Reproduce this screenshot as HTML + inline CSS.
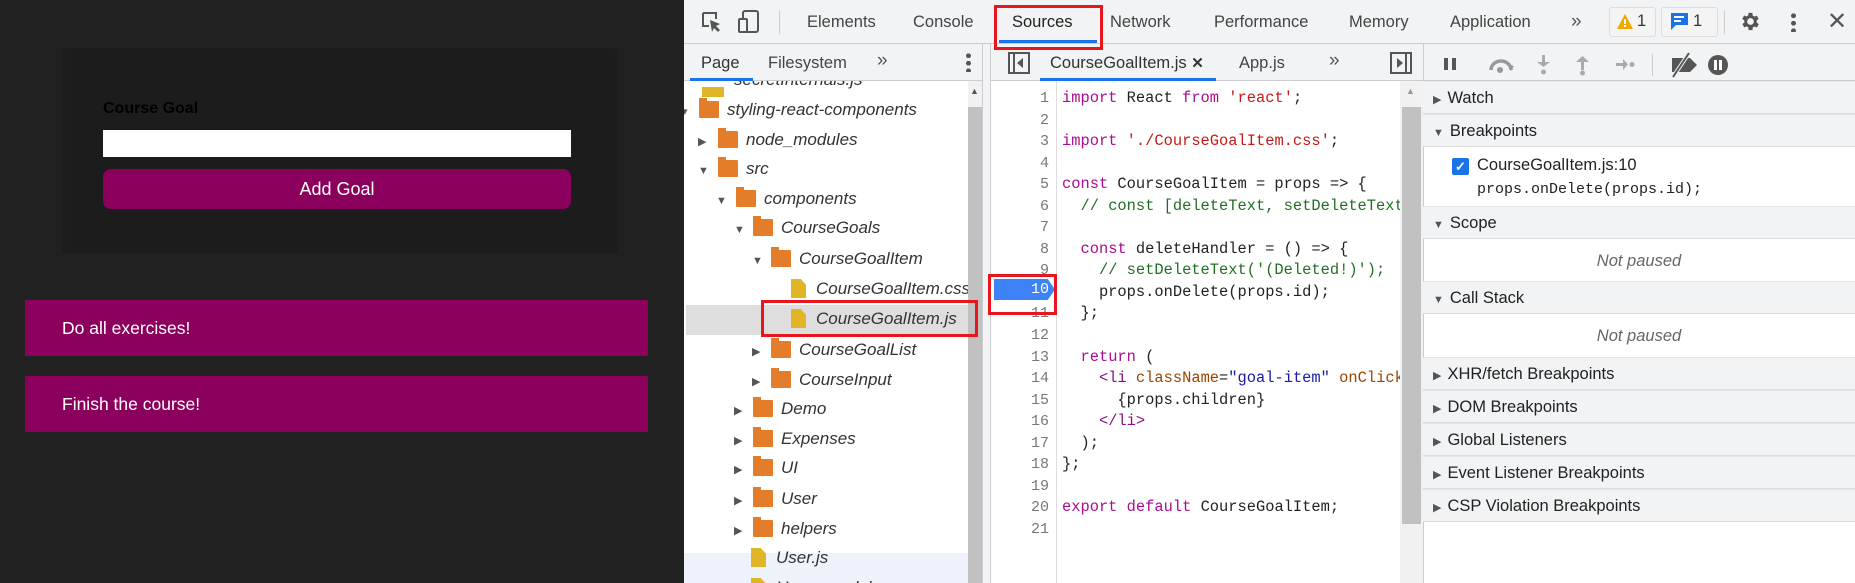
<!DOCTYPE html>
<html><head><meta charset="utf-8"><style>
*{margin:0;padding:0;box-sizing:border-box}
body{width:1855px;height:583px;overflow:hidden;position:relative;background:#fff;font-family:"Liberation Sans",sans-serif}
.a{position:absolute}
.ui{font-size:16.5px;color:#333;white-space:nowrap}
.code{font-family:"Liberation Mono",monospace;font-size:15.8px;white-space:pre;color:#222}
.k{color:#aa0d91}.s{color:#c41a16}.c{color:#236e25}.t{color:#881280}.at{color:#994500}.v{color:#1a1aa6}
.tr{position:absolute;height:30px;line-height:30px;font-size:17px;font-style:italic;color:#333;white-space:nowrap}
.fo{display:inline-block;width:20px;height:17px;background:#e37d2a;vertical-align:-3px;margin-right:8px;position:relative;border-radius:1px}
.fo:before{content:"";position:absolute;left:0;top:-3px;width:8px;height:4px;background:#e37d2a}
.fi{display:inline-block;width:15px;height:19px;background:#e0b526;vertical-align:-4px;margin-right:10px;margin-left:3px;clip-path:polygon(0 0,65% 0,100% 30%,100% 100%,0 100%)}
.ar{display:inline-block;width:14px;font-size:11px;font-style:normal;color:#555}
.hd{position:absolute;left:1423px;width:432px;height:33px;background:#f1f3f4;border-bottom:1px solid #ddd;border-top:1px solid #e4e4e4;font-size:16.5px;line-height:32px;color:#222;padding-left:10px}
.hd i{font-style:normal;font-size:11px;color:#555;margin-right:6px}
.np{position:absolute;left:1423px;width:432px;text-align:center;font-style:italic;color:#666;font-size:16.5px}
.red{position:absolute;border:3px solid #e8141e}
</style></head><body>
<!-- left app -->
<div class="a" style="left:0;top:0;width:684px;height:583px;background:#212121"></div>
<div class="a" style="left:62px;top:48px;width:556px;height:205px;background:#1d1d1d"></div>
<div class="a" style="left:71px;top:53px;width:542px;height:195px;background:#1c1c1c"></div>
<div class="a" style="left:103px;top:100px;font-weight:bold;font-size:16px;color:#000">Course Goal</div>
<div class="a" style="left:103px;top:130px;width:468px;height:27px;background:#fff"></div>
<div class="a" style="left:103px;top:169px;width:468px;height:40px;background:#8b005d;border-radius:8px;color:#fff;font-size:18px;text-align:center;line-height:40px">Add Goal</div>
<div class="a" style="left:25px;top:300px;width:623px;height:56px;background:#8b005d;color:#fff;font-size:17.5px;line-height:56px;padding-left:37px">Do all exercises!</div>
<div class="a" style="left:25px;top:376px;width:623px;height:56px;background:#8b005d;color:#fff;font-size:17.5px;line-height:56px;padding-left:37px">Finish the course!</div>

<!-- devtools top bar -->
<div class="a" style="left:684px;top:0;width:1171px;height:44px;background:#f1f3f4;border-bottom:1px solid #cbcdd1"></div>
<svg class="a" style="left:700px;top:10px" width="24" height="24" viewBox="0 0 24 24"><path d="M3 3h13v6M3 3v13h6" fill="none" stroke="#555" stroke-width="2"/><path d="M10 10l10 4-4 2 4 4-2 2-4-4-2 4z" fill="#555"/></svg>
<svg class="a" style="left:737px;top:9px" width="24" height="26" viewBox="0 0 24 26"><rect x="6" y="2" width="15" height="21" rx="2" fill="none" stroke="#555" stroke-width="2"/><rect x="2" y="10" width="8" height="13" rx="1" fill="#f1f3f4" stroke="#555" stroke-width="2"/></svg>
<div class="a" style="left:779px;top:10px;width:1px;height:24px;background:#ccc"></div>
<div class="a ui" style="left:807px;top:13px;color:#444">Elements</div>
<div class="a ui" style="left:913px;top:13px;color:#444">Console</div>
<div class="a ui" style="left:1012px;top:13px;color:#222">Sources</div>
<div class="a" style="left:999px;top:40px;width:98px;height:3px;background:#1a73e8"></div>
<div class="a ui" style="left:1110px;top:13px;color:#444">Network</div>
<div class="a ui" style="left:1214px;top:13px;color:#444">Performance</div>
<div class="a ui" style="left:1349px;top:13px;color:#444">Memory</div>
<div class="a ui" style="left:1450px;top:13px;color:#444">Application</div>
<div class="a ui" style="left:1571px;top:11px;font-size:19px;color:#555">»</div>
<div class="a" style="left:1609px;top:7px;width:47px;height:30px;border:1px solid #ddd;border-radius:3px;background:#f4f4f4"></div>
<svg class="a" style="left:1617px;top:14px" width="16" height="15" viewBox="0 0 16 15"><path d="M8 0L16 15H0z" fill="#f2a600"/><rect x="7" y="5" width="2" height="5" fill="#fff"/><rect x="7" y="11" width="2" height="2" fill="#fff"/></svg>
<div class="a ui" style="left:1637px;top:12px">1</div>
<div class="a" style="left:1661px;top:7px;width:57px;height:30px;border:1px solid #ddd;border-radius:3px;background:#f4f4f4"></div>
<svg class="a" style="left:1671px;top:13px" width="17" height="18" viewBox="0 0 17 18"><path d="M0 0h17v12H5l-5 5z" fill="#1a73e8"/><rect x="3" y="3" width="10" height="2" fill="#fff"/><rect x="3" y="7" width="7" height="2" fill="#fff"/></svg>
<div class="a ui" style="left:1693px;top:12px">1</div>
<div class="a" style="left:1724px;top:10px;width:1px;height:24px;background:#ccc"></div>
<svg class="a" style="left:1739px;top:10px" width="23" height="23" viewBox="0 0 24 24"><path fill="#555" d="M19.4 13a7.5 7.5 0 000-2l2.1-1.6-2-3.5-2.5 1a7 7 0 00-1.7-1L15 3h-4l-.4 2.8a7 7 0 00-1.7 1l-2.5-1-2 3.5L6.6 11a7.5 7.5 0 000 2l-2.1 1.6 2 3.5 2.5-1a7 7 0 001.7 1L11 21h4l.4-2.8a7 7 0 001.7-1l2.5 1 2-3.5zM13 15.5a3.5 3.5 0 110-7 3.5 3.5 0 010 7z" transform="translate(-1 0)"/></svg>
<div class="a" style="left:1791px;top:12px;width:5px;height:20px;background:radial-gradient(circle,#555 2.3px,transparent 2.5px) 0 0/5px 7.5px"></div>
<div class="a" style="left:1827px;top:7px;font-size:24px;color:#555">✕</div>

<!-- second row -->
<div class="a" style="left:684px;top:44px;width:1171px;height:37px;background:#f1f3f4;border-bottom:1px solid #cbcdd1"></div>
<div class="a ui" style="left:701px;top:54px">Page</div>
<div class="a" style="left:690px;top:78px;width:63px;height:3px;background:#1a73e8"></div>
<div class="a ui" style="left:768px;top:54px;color:#444">Filesystem</div>
<div class="a ui" style="left:877px;top:50px;font-size:19px;color:#555">»</div>
<div class="a" style="left:966px;top:52px;width:5px;height:20px;background:radial-gradient(circle,#555 2.3px,transparent 2.5px) 0 0/5px 7.5px"></div>
<div class="a" style="left:982px;top:44px;width:9px;height:539px;background:#f1f3f4;border-left:1px solid #cbcdd1;border-right:1px solid #cbcdd1"></div>
<svg class="a" style="left:1008px;top:52px" width="22" height="22" viewBox="0 0 22 22"><rect x="1" y="1" width="20" height="20" fill="none" stroke="#555" stroke-width="2"/><rect x="5" y="2" width="2" height="18" fill="#555"/><path d="M15 6v10l-6-5z" fill="#555"/></svg>
<div class="a ui" style="left:1050px;top:54px">CourseGoalItem.js <b style="font-size:15px">✕</b></div>
<div class="a" style="left:1040px;top:78px;width:176px;height:3px;background:#1a73e8"></div>
<div class="a ui" style="left:1239px;top:54px;color:#444">App.js</div>
<div class="a ui" style="left:1329px;top:50px;font-size:19px;color:#555">»</div>
<svg class="a" style="left:1390px;top:52px" width="22" height="22" viewBox="0 0 22 22"><rect x="1" y="1" width="20" height="20" fill="none" stroke="#555" stroke-width="2"/><rect x="15" y="2" width="2" height="18" fill="#555"/><path d="M7 6v10l6-5z" fill="#555"/></svg>
<div class="a" style="left:1423px;top:44px;width:1px;height:539px;background:#cbcdd1"></div>

<!-- debugger toolbar -->
<svg class="a" style="left:1435px;top:50px" width="300" height="30" viewBox="0 0 300 30">
<rect x="9" y="8" width="4" height="12" fill="#555"/><rect x="17" y="8" width="4" height="12" fill="#555"/>
<path d="M56 20a10 9 0 0120 0" fill="none" stroke="#999" stroke-width="3.5"/><circle cx="65" cy="20" r="3" fill="#999"/><path d="M72 14l7 2-3 5z" fill="#999"/>
<rect x="107" y="5" width="3" height="9" fill="#aaa"/><path d="M102 12h13l-6.5 5z" fill="#aaa"/><circle cx="108.5" cy="22" r="2.5" fill="#aaa"/>
<rect x="146" y="11" width="3" height="9" fill="#aaa"/><path d="M141 12h13l-6.5-6z" fill="#aaa"/><circle cx="147.5" cy="23" r="2.5" fill="#aaa"/>
<rect x="181" y="13" width="8" height="3" fill="#aaa"/><path d="M188 9v11l5-5.5z" fill="#aaa"/><circle cx="197" cy="14.5" r="2.5" fill="#aaa"/>
<rect x="217" y="4" width="1" height="22" fill="#ccc"/>
<path d="M237 8h18l7 7-7 7h-18z" fill="#555"/><path d="M254 3l-16 24" stroke="#f1f3f4" stroke-width="4"/><path d="M254 3l-16 24" stroke="#555" stroke-width="2"/>
<circle cx="283" cy="15" r="10" fill="#555"/><rect x="279" y="10" width="3" height="10" fill="#fff"/><rect x="284" y="10" width="3" height="10" fill="#fff"/>
</svg>

<!-- file tree -->
<div class="a" style="left:686px;top:305px;width:282px;height:30px;background:#dedede"></div>
<div class="a" style="left:684px;top:553px;width:284px;height:30px;background:#eef3fb"></div>
<div class="a" style="left:684px;top:81px;width:284px;height:502px;overflow:hidden">
<div class="tr" style="left:15px;top:-16px"><span class="fi" style="width:22px;height:10px;clip-path:none;vertical-align:-12px"></span>secretInternals.js</div>
<div class="tr" style="left:-2px;top:14px"><span class="ar" style="width:17px">▾</span><span class="fo"></span>styling-react-components</div>
<div class="tr" style="left:14px;top:44px"><span class="ar" style="width:20px">▶</span><span class="fo"></span>node_modules</div>
<div class="tr" style="left:14px;top:73px"><span class="ar" style="width:20px">▼</span><span class="fo"></span>src</div>
<div class="tr" style="left:32px;top:103px"><span class="ar" style="width:20px">▼</span><span class="fo"></span>components</div>
<div class="tr" style="left:50px;top:132px"><span class="ar" style="width:19px">▼</span><span class="fo"></span>CourseGoals</div>
<div class="tr" style="left:68px;top:163px"><span class="ar" style="width:19px">▼</span><span class="fo"></span>CourseGoalItem</div>
<div class="tr" style="left:104px;top:193px"><span class="fi"></span>CourseGoalItem.css</div>
<div class="tr" style="left:104px;top:223px"><span class="fi"></span>CourseGoalItem.js</div>
<div class="tr" style="left:68px;top:254px"><span class="ar" style="width:19px">▶</span><span class="fo"></span>CourseGoalList</div>
<div class="tr" style="left:68px;top:284px"><span class="ar" style="width:19px">▶</span><span class="fo"></span>CourseInput</div>
<div class="tr" style="left:50px;top:313px"><span class="ar" style="width:19px">▶</span><span class="fo"></span>Demo</div>
<div class="tr" style="left:50px;top:343px"><span class="ar" style="width:19px">▶</span><span class="fo"></span>Expenses</div>
<div class="tr" style="left:50px;top:372px"><span class="ar" style="width:19px">▶</span><span class="fo"></span>UI</div>
<div class="tr" style="left:50px;top:403px"><span class="ar" style="width:19px">▶</span><span class="fo"></span>User</div>
<div class="tr" style="left:50px;top:433px"><span class="ar" style="width:19px">▶</span><span class="fo"></span>helpers</div>
<div class="tr" style="left:64px;top:462px"><span class="fi"></span>User.js</div>
<div class="tr" style="left:64px;top:492px"><span class="fi"></span>Users.module.css</div>
</div>
<div class="a" style="left:968px;top:81px;width:14px;height:502px;background:#f1f1f1"></div>
<div class="a" style="left:968px;top:107px;width:14px;height:476px;background:#c1c1c1"></div>
<div class="a" style="left:970px;top:86px;font-size:9px;color:#555">▲</div>

<!-- editor -->
<div class="a" style="left:1056px;top:81px;width:1px;height:502px;background:#ddd"></div>
<div class="a code" style="left:1000px;top:88px;width:49px;text-align:right;line-height:21.55px;color:#777;font-size:15px">1
2
3
4
5
6
7
8
9

11
12
13
14
15
16
17
18
19
20
21</div>
<div class="a" style="left:994px;top:279px;width:61px;height:21px;background:#3e82f7;clip-path:polygon(0 0,88% 0,100% 50%,88% 100%,0 100%)"></div>
<div class="a code" style="left:1020px;top:279px;width:29px;text-align:right;line-height:21px;color:#fff;font-size:15px">10</div>
<div class="a code" style="left:1062px;top:88px;line-height:21.55px;width:338px;overflow:hidden;font-size:15.4px"><span class="k">import</span> React <span class="k">from</span> <span class="s">'react'</span>;

<span class="k">import</span> <span class="s">'./CourseGoalItem.css'</span>;

<span class="k">const</span> CourseGoalItem = props => {
  <span class="c">// const [deleteText, setDeleteText]</span>

  <span class="k">const</span> deleteHandler = () => {
    <span class="c">// setDeleteText('(Deleted!)');</span>
    props.onDelete(props.id);
  };

  <span class="k">return</span> (
    <span class="t">&lt;li</span> <span class="at">className</span>=<span class="v">"goal-item"</span> <span class="at">onClick</span>
      {props.children}
    <span class="t">&lt;/li&gt;</span>
  );
};

<span class="k">export</span> <span class="k">default</span> CourseGoalItem;
</div>
<div class="a" style="left:1400px;top:81px;width:23px;height:502px;background:#f1f1f1"></div>
<div class="a" style="left:1402px;top:107px;width:19px;height:417px;background:#c1c1c1"></div>
<div class="a" style="left:1406px;top:86px;font-size:9px;color:#999">▲</div>

<!-- right panel -->
<div class="hd" style="top:81px"><i>▶</i>Watch</div>
<div class="hd" style="top:114px"><i>▼</i>Breakpoints</div>
<div class="a" style="left:1452px;top:158px;width:17px;height:17px;background:#1a73e8;border-radius:2px;color:#fff;font-size:13px;line-height:17px;text-align:center;font-weight:bold">✓</div>
<div class="a ui" style="left:1477px;top:156px;color:#222">CourseGoalItem.js:10</div>
<div class="a code" style="left:1477px;top:181px;font-size:15px;color:#222">props.onDelete(props.id);</div>
<div class="hd" style="top:206px"><i>▼</i>Scope</div>
<div class="np" style="top:252px">Not paused</div>
<div class="hd" style="top:281px"><i>▼</i>Call Stack</div>
<div class="np" style="top:327px">Not paused</div>
<div class="hd" style="top:357px"><i>▶</i>XHR/fetch Breakpoints</div>
<div class="hd" style="top:390px"><i>▶</i>DOM Breakpoints</div>
<div class="hd" style="top:423px"><i>▶</i>Global Listeners</div>
<div class="hd" style="top:456px"><i>▶</i>Event Listener Breakpoints</div>
<div class="hd" style="top:489px"><i>▶</i>CSP Violation Breakpoints</div>

<!-- red boxes -->
<div class="red" style="left:994px;top:5px;width:109px;height:45px"></div>
<div class="red" style="left:761px;top:300px;width:217px;height:37px"></div>
<div class="red" style="left:988px;top:274px;width:69px;height:41px"></div>
</body></html>
